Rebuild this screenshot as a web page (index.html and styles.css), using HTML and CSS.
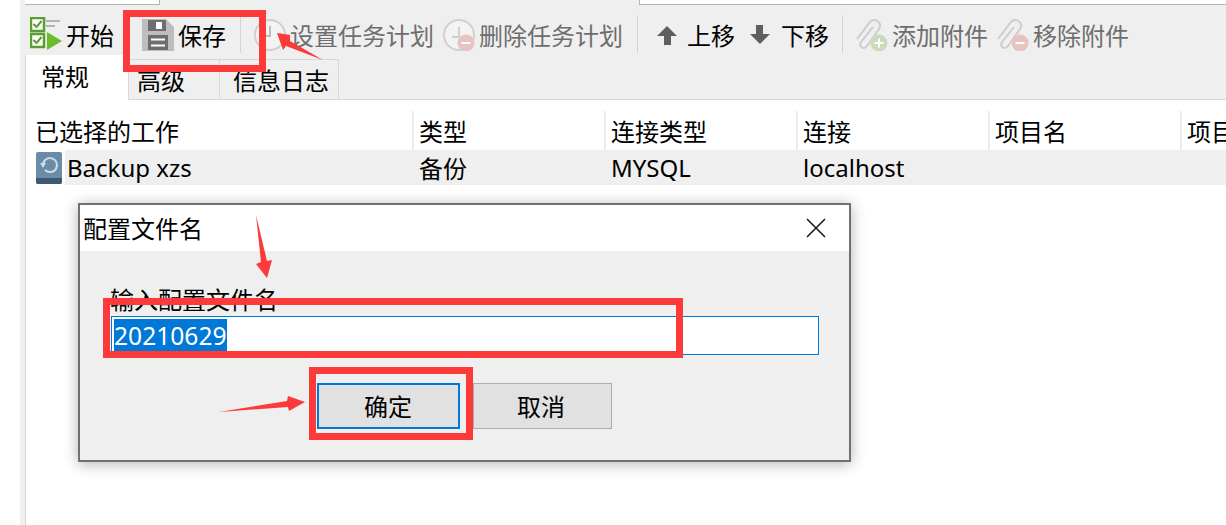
FILE: index.html
```html
<!DOCTYPE html>
<html lang="zh">
<head>
<meta charset="utf-8">
<title>配置文件名</title>
<link rel="stylesheet" href="styles.css">
</head>
<body>
<div class="app">
  <div class="gutter"></div>
  <div class="main">
    <div class="topstrip">
      <div class="toptab first"></div>
      <div class="toptab second"></div>
    </div>
    <div class="toolbar">
      <div class="tool start">
        <svg class="ico" width="32" height="36" viewBox="0 0 32 36">
          <rect x="1" y="1" width="13" height="13" fill="#fff" stroke="#5a9e32" stroke-width="2.500"/>
          <path d="M3.500 7l3 3 5-6" fill="none" stroke="#5a9e32" stroke-width="2"/>
          <rect x="1" y="17" width="13" height="13" fill="#fff" stroke="#5a9e32" stroke-width="2.500"/>
          <path d="M3.500 23l3 3 5-6" fill="none" stroke="#5a9e32" stroke-width="2"/>
          <path d="M16 4h14M16 9h9" stroke="#b4b4b4" stroke-width="2"/>
          <path d="M17 15l15 9-15 9z" fill="#6cbb2c"/>
        </svg>
        <span>开始</span>
      </div>
      <div class="tool save">
        <svg class="ico" width="32" height="32" viewBox="0 0 32 32">
          <path d="M0 0h24l8 8v24H0z" fill="#bdbdbd"/>
          <rect x="6" y="1" width="18" height="11" fill="#6e6e6e"/>
          <rect x="14" y="3" width="6" height="7" fill="#fff"/>
          <rect x="6" y="16" width="20" height="15" fill="#6e6e6e"/>
          <path d="M9 20.500h14M9 26.500h14" stroke="#fff" stroke-width="2"/>
        </svg>
        <span>保存</span>
      </div>
      <i class="sep sep-a"></i>
      <div class="tool off plan-add">
        <svg class="ico" width="32" height="32" viewBox="0 0 32 32">
          <circle cx="16" cy="16" r="15" fill="#f3f3f3" stroke="#cfcfcf" stroke-width="2"/>
          <path d="M16 7v10H8" fill="none" stroke="#bdbdbd" stroke-width="2"/>
        </svg>
        <span>设置任务计划</span>
      </div>
      <div class="tool off plan-del">
        <svg class="ico" width="32" height="32" viewBox="0 0 32 32">
          <circle cx="16" cy="16" r="15" fill="#f3f3f3" stroke="#cfcfcf" stroke-width="2"/>
          <path d="M16 8v10H9" fill="none" stroke="#cfcfcf" stroke-width="2"/>
          <circle cx="23" cy="24" r="8.500" fill="#e6c4c2"/>
          <path d="M18.500 24h9" stroke="#fff" stroke-width="2"/>
        </svg>
        <span>删除任务计划</span>
      </div>
      <i class="sep sep-b"></i>
      <div class="tool up">
        <svg class="arrow" width="20" height="20" viewBox="0 0 20 20"><path d="M10 1l10 10h-6v9H7v-9H0z" fill="#5f5f5f"/></svg>
        <span>上移</span>
      </div>
      <div class="tool down">
        <svg class="arrow" width="20" height="20" viewBox="0 0 20 20"><path d="M10 19L0 9h6V0h7v9h7z" fill="#5f5f5f"/></svg>
        <span>下移</span>
      </div>
      <i class="sep sep-c"></i>
      <div class="tool off clip-add">
        <svg class="ico" width="32" height="32" viewBox="0 0 32 32">
          <path d="M17 8L5 23c-3 5 3 8 6 4L23 10c3-5-1-9-5-9-2 0-3 1-4 2L1 20" fill="none" stroke="#cdcdcd" stroke-width="2"/>
          <circle cx="23" cy="24" r="8.500" fill="#c9dbba"/>
          <path d="M18.500 24h9M23 19.500v9" stroke="#fff" stroke-width="2"/>
        </svg>
        <span>添加附件</span>
      </div>
      <div class="tool off clip-del">
        <svg class="ico" width="32" height="32" viewBox="0 0 32 32">
          <path d="M17 8L5 23c-3 5 3 8 6 4L23 10c3-5-1-9-5-9-2 0-3 1-4 2L1 20" fill="none" stroke="#cdcdcd" stroke-width="2"/>
          <circle cx="23" cy="24" r="8.500" fill="#e6c4c2"/>
          <path d="M18.500 24h9" stroke="#fff" stroke-width="2"/>
        </svg>
        <span>移除附件</span>
      </div>
    </div>
    <div class="tabs">
      <div class="tab active">常规</div>
      <div class="tab t2">高级</div>
      <div class="tab t3">信息日志</div>
      <div class="tabfill"></div>
    </div>
    <div class="content">
      <div class="grid-row head">
        <div class="cell c1">已选择的工作</div>
        <div class="cell">类型</div>
        <div class="cell">连接类型</div>
        <div class="cell">连接</div>
        <div class="cell">项目名</div>
        <div class="cell">项目</div>
      </div>
      <div class="grid-row data">
        <svg class="job-ico" width="26" height="32" viewBox="0 0 26 32">
          <rect width="26" height="32" rx="2" fill="#6a8ca8"/>
          <path d="M0 26h26v4a2 2 0 0 1-2 2H2a2 2 0 0 1-2-2z" fill="#3e5a72"/>
          <path d="M7 13a7 7 0 1 1 2 5" fill="none" stroke="#cfdde8" stroke-width="2"/>
          <path d="M4 11h6l-3 5z" fill="#cfdde8"/>
        </svg>
        <div class="data-cells">
          <div class="cell c1 latin">Backup xzs</div>
          <div class="cell">备份</div>
          <div class="cell latin">MYSQL</div>
          <div class="cell latin">localhost</div>
          <div class="cell"></div>
          <div class="cell"></div>
        </div>
      </div>
    </div>
  </div>
</div>

<div class="dialog">
  <div class="dlg-title">
    <span>配置文件名</span>
    <svg width="20" height="20" viewBox="0 0 20 20"><path d="M1 1l18 18M19 1L1 19" stroke="#1a1a1a" stroke-width="1.600" fill="none"/></svg>
  </div>
  <div class="dlg-body">
    <div class="dlg-label">输入配置文件名</div>
    <div class="dlg-input"><span class="sel">20210629</span></div>
    <div class="dlg-actions">
      <div class="btn primary">确定</div>
      <div class="btn">取消</div>
    </div>
  </div>
</div>

<div class="mark mark-save"></div>
<div class="mark mark-input"></div>
<div class="mark mark-ok"></div>
<svg class="arrows" width="1226" height="525" viewBox="0 0 1226 525">
  <path d="M323 60L290 41 290 35 277 33 283 50 286 46z" fill="#fc3a3a"/>
  <path d="M256 215L267 261 272 260 267 278 256 264 261 262z" fill="#fc3a3a"/>
  <path d="M219 412L287 401 288 396 305 402 289 411 288 407z" fill="#fc3a3a"/>
</svg>
</body>
</html>
```

FILE: styles.css
```css
* { box-sizing: border-box; }
html, body { margin: 0; padding: 0; height: 100%; overflow: hidden; }
body {
  position: relative;
  width: 1226px;
  height: 525px;
  background: #fff;
  color: #000;
  font-family: "Noto Sans", "Noto Sans CJK SC", sans-serif;
  font-size: 24px;
  line-height: 32px;
}
.app { display: flex; height: 525px; }
.gutter { width: 20px; background: #fff; flex: none; }
.main { flex: 1; display: flex; flex-direction: column; background: #efefef; min-width: 0; }

.topstrip { height: 6px; display: flex; padding-left: 5px; flex: none; }
.toptab { height: 5px; background: #fff; border-bottom: 1px solid #b4b4b4; }
.toptab.first { width: 135px; border-right: 1px solid #b4b4b4; }
.toptab.second { flex: 1; margin-left: 479px; border-left: 1px solid #b4b4b4; }

.toolbar { height: 49px; display: flex; align-items: center; flex: none; padding: 9px 0 0 10px; font-family: "Noto Sans CJK SC", sans-serif; }
.tool { display: flex; align-items: center; flex: none; }
.tool.off { color: #6e6e6e; }
.ico { flex: none; margin-right: 4px; }
.arrow { flex: none; margin-right: 10px; }
.start { margin-right: 28px; }
.save { margin-right: 14px; }
.sep { display: block; width: 1px; height: 38px; background: #d4d4d4; flex: none; margin-top: -3px; }
.sep-a { margin-right: 13px; }
.plan-add { margin-right: 9px; }
.plan-del { margin-right: 14px; }
.sep-b { margin-right: 19px; }
.up { margin-right: 15px; }
.down { margin-right: 13px; }
.down .arrow { margin-right: 11px; }
.sep-c { margin-right: 13px; }
.clip-add { margin-right: 9px; }

.tabs { height: 45px; display: flex; align-items: flex-end; flex: none; padding-left: 5px; font-family: "Noto Sans CJK SC", sans-serif; }
.tab { flex: none; }
.tab.active { width: 103px; height: 45px; background: #fff; padding: 5px 0 0 15px; border-left: 1px solid #d8d8d8; }
.tab.t2, .tab.t3 { height: 41px; background: #efefef; border: 1px solid #d8d8d8; padding-top: 4px; }
.tab.t2 { width: 92px; padding-left: 8px; }
.tab.t3 { width: 119px; padding-left: 13px; border-left: 0; }
.tabfill { flex: 1; height: 1px; background: #d8d8d8; }

.content { flex: 1; margin-left: 5px; background: #fff; border-left: 1px solid #d8d8d8; padding-top: 11px; overflow: hidden; }
.grid-row, .data-cells {
  display: grid;
  grid-template-columns: 386px repeat(4, 192px) 46px;
  font-family: "Noto Sans CJK SC", sans-serif;
}
.cell { padding-left: 6px; white-space: nowrap; }
.cell.c1 { padding-left: 9px; }
.head { height: 39px; }
.head .cell { height: 39px; padding-top: 4px; }
.head .cell + .cell { border-left: 2px solid #ececec; padding-left: 5px; }
.data { display: flex; height: 35px; background: linear-gradient(#efefef, #efefef) 39px 0 no-repeat; padding-left: 10px; align-items: center; }
.job-ico { flex: none; margin-right: 3px; }
.data-cells { flex: 1; grid-template-columns: 347px repeat(4, 192px) 46px; }
.data-cells .cell.c1 { padding-left: 2px; }
.data-cells .cell { padding-left: 7px; }
.latin { font-family: "Noto Sans", sans-serif; font-size: 24px; }

.dialog {
  position: absolute;
  left: 78px; top: 203px;
  width: 773px; height: 259px;
  border: 2px solid #707070;
  background: #efefef;
  box-shadow: 0 2px 14px rgba(0,0,0,.3);
  font-family: "Noto Sans CJK SC", sans-serif;
}
.dlg-title { height: 46px; background: #fff; display: flex; align-items: center; justify-content: space-between; padding: 0 23px 0 3px; }
.dlg-body { padding: 31px 30px 0 30px; }
.dlg-label { height: 34px; line-height: 34px; }
.dlg-input { height: 39px; margin-left: 1px; background: #fff; border: 1px solid #0078d7; padding: 2px; font-family: "Noto Sans", sans-serif; line-height: 33px; }
.sel { display: inline-block; background: #0078d7; color: #fff; height: 33px; font-size: 24.600px; }
.dlg-actions { display: flex; margin: 28px 0 0 207px; }
.btn { height: 46px; background: #e1e1e1; border: 1px solid #adadad; display: flex; align-items: center; justify-content: center; width: 139px; padding-right: 3px; }
.btn.primary { width: 143px; border: 2px solid #0078d7; margin-right: 13px; padding-right: 1px; }

.mark { position: absolute; border: 7px solid #fc3a3a; }
.mark-save { left: 123px; top: 10px; width: 143px; height: 62px; }
.mark-input { left: 103px; top: 298px; width: 580px; height: 60px; }
.mark-ok { left: 309px; top: 367px; width: 164px; height: 73px; }
.arrows { position: absolute; left: 0; top: 0; pointer-events: none; }
```
